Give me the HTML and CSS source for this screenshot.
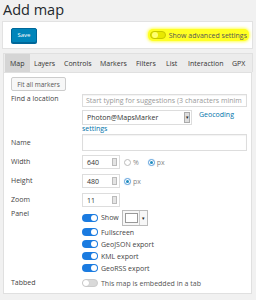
FILE: index.html
```html
<!DOCTYPE html>
<html>
<head>
<meta charset="utf-8">
<link rel="stylesheet" href="styles.css">
</head>
<body>
<h1 class="title">Add map</h1>
<div class="topbox">
  <button class="btn-primary">Save</button>
  <span class="highlight">
    <span class="toggle toggle-yellow"><span class="knob"></span></span>
    <span class="adv">Show advanced settings</span>
  </span>
</div>
<div class="tabs">
  <span class="tab active">Map</span>
  <span class="tab">Layers</span>
  <span class="tab">Controls</span>
  <span class="tab">Markers</span>
  <span class="tab">Filters</span>
  <span class="tab">List</span>
  <span class="tab">Interaction</span>
  <span class="tab">GPX</span>
</div>
<div class="panel">
  <button class="btn">Fit all markers</button>

  <div class="frow r-find">
    <div class="label">Find a location</div>
    <div class="input input-wide">Start typing for suggestions (3 characters minim</div>
  </div>
  <div class="frow r-select">
    <div class="label"></div>
    <div class="select"><span>Photon@MapsMarker</span><span class="sel-arrow">&#9662;</span></div>
    <a class="link geo">Geocoding</a>
  </div>
  <div class="frow r-settings">
    <div class="label"></div>
    <a class="link">settings</a>
  </div>

  <div class="frow r-name">
    <div class="label">Name</div>
    <div class="input input-wide input-name"></div>
  </div>

  <div class="frow r-num r-width">
    <div class="label">Width</div>
    <div class="num"><span>640</span><span class="spin"></span></div>
    <span class="radio"></span><span class="unit">%</span>
    <span class="radio checked"></span><span class="unit">px</span>
  </div>
  <div class="frow r-num">
    <div class="label">Height</div>
    <div class="num"><span>480</span><span class="spin"></span></div>
    <span class="radio checked"></span><span class="unit">px</span>
  </div>
  <div class="frow r-num">
    <div class="label">Zoom</div>
    <div class="num"><span>11</span><span class="spin"></span></div>
  </div>

  <div class="frow r-panel">
    <div class="label">Panel</div>
    <div class="toggles">
      <div class="trow show">
        <span class="toggle on"><span class="knob"></span></span>
        <span class="tlabel">Show</span>
        <span class="color"><span class="swatch"></span><span class="c-arrow">&#9662;</span></span>
      </div>
      <div class="trow"><span class="toggle on"><span class="knob"></span></span><span class="tlabel">Fullscreen</span></div>
      <div class="trow"><span class="toggle on"><span class="knob"></span></span><span class="tlabel">GeoJSON export</span></div>
      <div class="trow"><span class="toggle on"><span class="knob"></span></span><span class="tlabel">KML export</span></div>
      <div class="trow"><span class="toggle on"><span class="knob"></span></span><span class="tlabel">GeoRSS export</span></div>
    </div>
  </div>

  <div class="frow r-tabbed">
    <div class="label">Tabbed</div>
    <div class="trow"><span class="toggle off"><span class="knob"></span></span><span class="tlabel muted">This map is embedded in a tab</span></div>
  </div>
</div>
</body>
</html>
```
FILE: styles.css
```css
* { box-sizing: border-box; }
body {
  margin: 0;
  background: #f1f1f1;
  font-family: "Open Sans", "Noto Sans", sans-serif;
  font-size: 7px;
  color: #444;
  width: 256px;
  height: 300px;
  overflow: hidden;
}
.title {
  margin: 0;
  padding: 1px 0 0 3px;
  height: 21px;
  font-size: 14.5px;
  font-weight: 400;
  color: #23282d;
  line-height: 18px;
}
.topbox {
  margin: 0 3px 0 2px;
  height: 28px;
  background: #fff;
  border: 1px solid #e2e2e2;
  display: flex;
  align-items: center;
  justify-content: space-between;
  padding: 0 3px 0 8px;
}
.btn-primary {
  width: 26px;
  height: 15px;
  padding: 0;
  border: 1px solid #006799;
  border-radius: 2px;
  background: #0085ba;
  color: #fff;
  font-family: inherit;
  font-size: 6px;
  box-shadow: 0 1px 0 #006799;
}
.highlight {
  display: flex;
  align-items: center;
  gap: 3px;
  background: #ffff22;
  height: 12px;
  padding: 0 2px;
  border-radius: 5px;
  box-shadow: 0 0 3px 1px #ffff55;
  color: #555;
  font-size: 7px;
}
.toggle {
  position: relative;
  display: inline-block;
  width: 16px;
  height: 8px;
  border-radius: 4px;
  flex: none;
}
.toggle .knob {
  position: absolute;
  top: 1px;
  width: 6px;
  height: 6px;
  border-radius: 50%;
  background: #fff;
}
.toggle-yellow {
  background: #e8e800;
  border: 1px solid #c8c800;
}
.toggle-yellow .knob { left: 1px; top: 0; background: #ffff70; }
.toggle.on { background: #1a7be0; }
.toggle.on .knob { right: 1px; }
.toggle.off { background: #d9d9d9; border: 1px solid #ccc; }
.toggle.off .knob { left: 0; top: 0; box-shadow: 0 0 1px #aaa; }

.tabs {
  margin: 4px 3px 0 3px;
  height: 19px;
  background: #ececec;
  border: 1px solid #e0e0e0;
  border-bottom: none;
  display: flex;
  align-items: stretch;
  font-size: 7px;
  color: #333;
}
.tab {
  display: flex;
  align-items: center;
  padding-left: 4px;
  flex: none;
  white-space: nowrap;
}
.tab:nth-child(1) { margin-left: 1px; width: 25px; padding-left: 5px; }
.tab:nth-child(2) { width: 30px; }
.tab:nth-child(3) { width: 36px; }
.tab:nth-child(4) { width: 36px; }
.tab:nth-child(5) { width: 30px; }
.tab:nth-child(6) { width: 22px; }
.tab:nth-child(7) { width: 44px; }
.tab.active { background: #d5d5d5; }

.panel {
  margin: 0 4px 0 3px;
  height: 222px;
  background: #fff;
  border: 1px solid #e0e0e0;
  padding: 4px 4px 0 7px;
}
.btn {
  display: block;
  height: 14px;
  width: 55px;
  padding: 0;
  border: 1px solid #ccc;
  border-radius: 2px;
  background: #f7f7f7;
  font-family: inherit;
  font-size: 6.5px;
  color: #555;
}
.frow { display: flex; align-items: center; }
.label { width: 71px; flex: none; color: #444; line-height: 10px; }
.link { color: #0073aa; text-decoration: none; }

.r-find { margin-top: 3px; align-items: flex-start; }
.r-find .label { line-height: 9px; }
.input {
  height: 13px;
  border: 1px solid #ddd;
  box-shadow: inset 0 1px 1px rgba(0,0,0,.05);
  color: #999;
  padding-left: 3px;
  line-height: 11px;
  white-space: nowrap;
  overflow: hidden;
}
.input-wide { width: 166px; }
.input-name { height: 17px; }

.r-select { margin-top: 3px; align-items: flex-start; }
.select {
  width: 110px;
  height: 15px;
  border: 1px solid #ddd;
  display: flex;
  justify-content: space-between;
  align-items: center;
  padding-left: 4px;
  color: #333;
}
.sel-arrow {
  width: 6px;
  height: 11px;
  background: #ddd;
  border: 1px solid #aaa;
  font-size: 5px;
  line-height: 9px;
  text-align: center;
  margin-right: 1px;
  color: #222;
}
.geo { margin-left: 7px; line-height: 10px; }
.r-settings { line-height: 8px; height: 8px; }
.r-settings .link { line-height: 8px; }
.r-name { margin-top: 1px; }

.r-num { margin-top: 5px; }
.r-width { margin-top: 4px; }
.num {
  width: 38px;
  height: 14px;
  border: 1px solid #ddd;
  display: flex;
  justify-content: space-between;
  align-items: center;
  padding: 0 2px 0 4px;
  color: #333;
}
.spin {
  width: 5px;
  height: 8px;
  border: 1px solid #bbb;
  background: linear-gradient(#e4e4e4 45%, #999 45%, #999 55%, #e4e4e4 55%);
}
.radio {
  width: 7px;
  height: 7px;
  border: 1px solid #bbb;
  border-radius: 50%;
  margin-left: 4px;
  margin-right: 2px;
  position: relative;
  flex: none;
}
.radio.checked { border-color: #5b9dd9; box-shadow: 0 0 1px #8cc4f0; }
.radio.checked::after {
  content: "";
  position: absolute;
  left: 1px; top: 1px;
  width: 3px; height: 3px;
  border-radius: 50%;
  background: #1e8cbe;
}
.unit { color: #888; margin-right: 5px; }

.r-panel { margin-top: 2px; align-items: flex-start; }
.toggles { display: flex; flex-direction: column; }
.trow { display: flex; align-items: center; gap: 3px; height: 12px; }
.trow.show { height: 17px; }
.color {
  display: flex;
  align-items: stretch;
  height: 16px;
  width: 26px;
  border: 1px solid #bbb;
  background: #f7f7f7;
  margin-left: 0;
}
.swatch {
  width: 13px;
  margin: 2px 1px 2px 2px;
  border: 1px solid #999;
  background: #fff;
}
.c-arrow {
  flex: 1;
  border-left: 1px solid #ccc;
  font-size: 5px;
  text-align: center;
  line-height: 14px;
  color: #222;
}
.tlabel { color: #444; }
.muted { color: #555; }
.r-tabbed { margin-top: 3px; }
```
